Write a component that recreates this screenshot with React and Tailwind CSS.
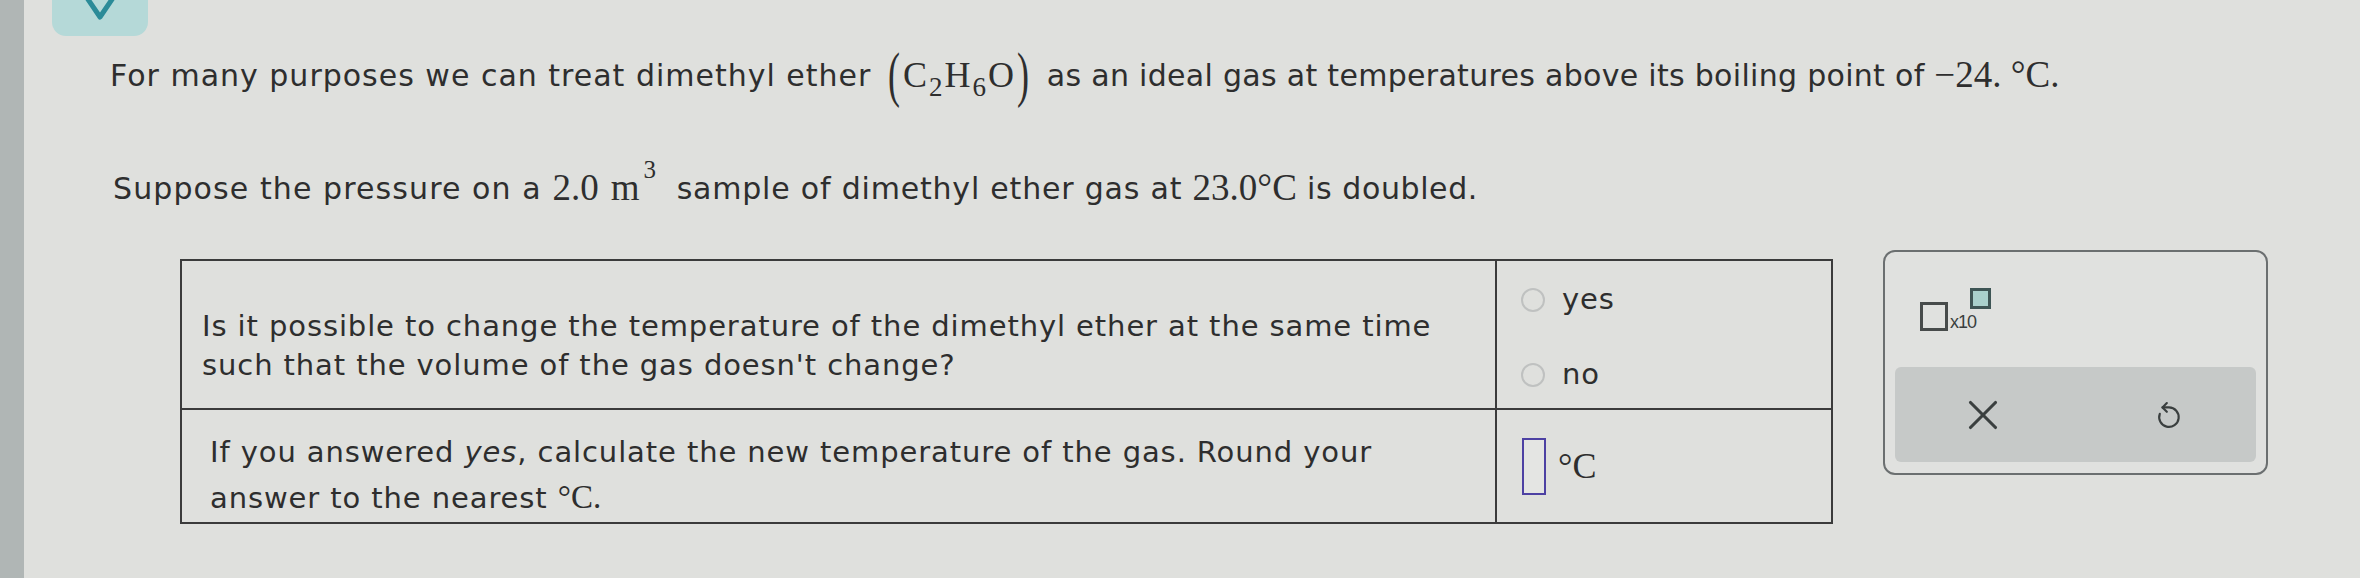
import { X } from 'lucide-react'

const SERIF = "font-['Liberation_Serif',serif] tracking-normal"

function UndoIcon() {
  return (
    <svg width="26" height="32" viewBox="0 0 24 28" fill="none" stroke="#3a3f3f" strokeWidth="2" strokeLinecap="round" strokeLinejoin="round">
      <path d="M10 3 L6 7 L10 11" />
      <path d="M6 7 H12 A9 9 0 1 1 3.5 12.9" />
    </svg>
  )
}

function Radio({ label }) {
  return (
    <div className="flex items-center gap-[17px]">
      <span className="h-[24px] w-[24px] rounded-full border-2 border-[#bfc1c0]" />
      <span className="leading-none">{label}</span>
    </div>
  )
}

export default function App() {
  return (
    <div className="flex h-[578px] w-[2360px] overflow-hidden bg-[#dfe0dd] font-['DejaVu_Sans',sans-serif] text-[#2e2e2e]">
      {/* left edge of the window */}
      <div className="w-[24px] shrink-0 bg-[#b0b6b5]" />

      <main className="flex-1">
        {/* collapsed header tab */}
        <div className="ml-[28px] flex h-[36px] w-[96px] justify-center rounded-b-[14px] bg-[#b5d9d8]">
          <svg width="40" height="22" viewBox="0 0 40 22" fill="none" stroke="#2b8b98" strokeWidth="5" strokeLinecap="round" strokeLinejoin="round">
            <polyline points="3,-8 20,17 37,-8" />
          </svg>
        </div>

        <p className="ml-[86px] mt-[9px] flex h-[60px] items-center whitespace-pre text-[30px]">
          <span className="tracking-[1px]">For many purposes we can treat dimethyl ether </span>
          <span className={`${SERIF} ml-[6px] mr-[8px] text-[36px]`}>
            <span className="mr-[3px] inline-block scale-y-[1.7] leading-none font-light">(</span>
            C<span className="relative top-[9px] mx-[2px] text-[27px]">2</span>H<span className="relative top-[9px] mx-[2px] text-[27px]">6</span>O
            <span className="ml-[3px] inline-block scale-y-[1.7] leading-none font-light">)</span>
          </span>
          <span className="tracking-[0.3px]"> as an ideal gas at temperatures above its boiling point of </span>
          <span className={`${SERIF} text-[37px]`}>−24. °C.</span>
        </p>

        <p className="ml-[89px] mt-[63px] flex h-[40px] items-center whitespace-pre text-[30px] tracking-[1.1px]">
          <span>Suppose the pressure on a </span>
          <span className={`${SERIF} text-[37px]`}>
            2.0<span className="ml-[12px]">m</span><span className="relative -top-[22px] ml-[4px] text-[25px]">3</span>
          </span>
          <span className="tracking-[0.8px]">  sample of dimethyl ether gas at </span>
          <span className={`${SERIF} text-[37px]`}>23.0°C</span>
          <span className="tracking-[0.6px]"> is doubled.</span>
        </p>

        <div className="mt-[42px] flex items-start">
          {/* question table */}
          <div className="ml-[156px] mt-[9px] grid w-[1653px] grid-cols-[1315px_1fr] border-2 border-[#3b3b3b] text-[29px] tracking-[0.9px]">
            <div className="flex h-[149px] items-center border-b-2 border-r-2 border-[#3b3b3b] pl-[20px] pt-[22px] leading-[39px]">
              <p>
                Is it possible to change the temperature of the dimethyl ether at the same time
                <br />
                such that the volume of the gas doesn't change?
              </p>
            </div>
            <div className="flex h-[149px] flex-col gap-[46px] border-b-2 border-[#3b3b3b] pl-[24px] pt-[24px]">
              <Radio label="yes" />
              <Radio label="no" />
            </div>

            <div className="flex h-[112px] items-center border-r-2 border-[#3b3b3b] pl-[28px] pt-[18px] leading-[45px]">
              <p>
                If you answered <i>yes</i>, calculate the new temperature of the gas. Round your
                <br />
                answer to the nearest <span className={`${SERIF} text-[33px]`}>°C.</span>
              </p>
            </div>
            <div className="flex h-[112px] items-center gap-[12px] pl-[25px]">
              <span className="h-[57px] w-[24px] border-2 border-[#4d41a3] bg-[#e4e5e3]" />
              <span className={`${SERIF} text-[36px]`}>°C</span>
            </div>
          </div>

          {/* answer tools */}
          <div className="ml-[50px] flex h-[225px] w-[385px] flex-col rounded-[12px] border-2 border-[#6b6f70] bg-[#e0e1df]">
            <div className="relative ml-[35px] mt-[50px] h-[30px] w-[60px]">
              <span className="absolute left-0 top-0 h-[29px] w-[28px] border-[3px] border-[#474b4b]" />
              <span className="absolute left-[30px] top-[11px] font-['Liberation_Sans',sans-serif] text-[18px] leading-none tracking-[-1px] text-[#3a3e3e]">x10</span>
              <span className="absolute left-[50px] -top-[14px] h-[21px] w-[21px] border-[3px] border-[#3e5555] bg-[#a9d0cc]" />
            </div>
            <div className="mx-[10px] mt-[35px] flex h-[95px] items-center justify-between rounded-[6px] bg-[#c6c9c8] pl-[63px] pr-[74px]">
              <X size={50} strokeWidth={1.5} color="#3a3f3f" />
              <UndoIcon />
            </div>
          </div>
        </div>
      </main>
    </div>
  )
}
